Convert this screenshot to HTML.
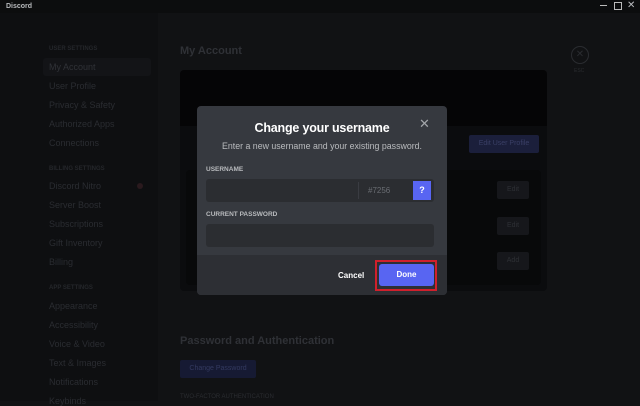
<!DOCTYPE html><html><head><style>
body{margin:0;width:640px;height:401px;overflow:hidden;background:#111214;font-family:"Liberation Sans",sans-serif;position:relative}
.a{position:absolute}
.tb{left:0;top:0;width:640px;height:13px;background:#0c0d0e;color:#b9bbbe;font-size:7px;font-weight:bold}
.side{left:0;top:13px;width:158px;height:388px;background:#0e0f11}
.h{font-size:6px;font-weight:bold;color:#25272b;left:49px}
.i{font-size:9px;color:#2a2c31;left:49px}
.box{background:#050506}
.btn{background:#16171b;color:#2e3035;font-size:7px;text-align:center;border-radius:2px}
</style></head><body>
<div class="a tb"><span class="a" style="left:6px;top:3px">Discord</span>
<span class="a" style="left:600px;top:5px;width:7px;height:1px;background:#bbb"></span>
<span class="a" style="left:614px;top:2px;width:6px;height:6px;border:1px solid #bbb"></span>
<span class="a" style="left:627px;top:0px;font-size:10px;font-weight:normal">✕</span></div>
<div class="a side"></div>
<div class="a" style="left:43px;top:58px;width:108px;height:18px;background:#131417;border-radius:3px"></div>
<div class="a h" style="top:46px">USER SETTINGS</div>
<div class="a i" style="top:62px;color:#303237">My Account</div>
<div class="a i" style="top:81px">User Profile</div>
<div class="a i" style="top:100px">Privacy &amp; Safety</div>
<div class="a i" style="top:119px">Authorized Apps</div>
<div class="a i" style="top:138px">Connections</div>
<div class="a h" style="top:166px">BILLING SETTINGS</div>
<div class="a i" style="top:181px">Discord Nitro</div>
<div class="a" style="left:137px;top:183px;width:6px;height:6px;border-radius:50%;background:#2a1a1e"></div>
<div class="a i" style="top:200px">Server Boost</div>
<div class="a i" style="top:219px">Subscriptions</div>
<div class="a i" style="top:238px">Gift Inventory</div>
<div class="a i" style="top:257px">Billing</div>
<div class="a h" style="top:285px">APP SETTINGS</div>
<div class="a i" style="top:301px">Appearance</div>
<div class="a i" style="top:320px">Accessibility</div>
<div class="a i" style="top:339px">Voice &amp; Video</div>
<div class="a i" style="top:358px">Text &amp; Images</div>
<div class="a i" style="top:377px">Notifications</div>
<div class="a i" style="top:396px">Keybinds</div>
<div class="a" style="left:180px;top:45px;font-size:11px;font-weight:bold;color:#2f3136">My Account</div>
<div class="a" style="left:571px;top:46px;width:16px;height:16px;border:1px solid #2a2c30;border-radius:50%;color:#2a2c30;font-size:10px;text-align:center;line-height:16px">✕</div>
<div class="a" style="left:574px;top:68px;font-size:5px;color:#2a2c30">ESC</div>
<div class="a box" style="left:180px;top:70px;width:367px;height:56px;border-radius:4px 4px 0 0"></div>
<div class="a" style="left:180px;top:126px;width:367px;height:165px;background:#0b0c0e;border-radius:0 0 4px 4px"></div>
<div class="a" style="left:186px;top:170px;width:355px;height:115px;background:#08090a;border-radius:4px"></div>
<div class="a btn" style="left:469px;top:135px;width:70px;height:18px;line-height:18px;background:#1b1f3b;color:#3a3f66">Edit User Profile</div>
<div class="a btn" style="left:497px;top:181px;width:32px;height:18px;line-height:18px">Edit</div>
<div class="a btn" style="left:497px;top:217px;width:32px;height:18px;line-height:18px">Edit</div>
<div class="a btn" style="left:497px;top:252px;width:32px;height:18px;line-height:18px">Add</div>
<div class="a" style="left:180px;top:335px;font-size:11px;font-weight:bold;color:#2f3136">Password and Authentication</div>
<div class="a btn" style="left:180px;top:360px;width:76px;height:18px;line-height:18px;background:#161a33;color:#343a60">Change Password</div>
<div class="a" style="left:180px;top:394px;font-size:6px;color:#2a2c30">TWO-FACTOR AUTHENTICATION</div>
<div class="a" style="left:197px;top:106px;width:250px;height:189px;background:#36393f;border-radius:4px;overflow:hidden">
<div class="a" style="left:0;width:250px;top:15px;text-align:center;font-size:12.5px;font-weight:bold;color:#fff;letter-spacing:-0.2px">Change your username</div>
<div class="a" style="left:222px;top:10px;color:#a3a6aa;font-size:13px">✕</div>
<div class="a" style="left:0;width:250px;top:35px;text-align:center;font-size:8.8px;color:#b9bbbe">Enter a new username and your existing password.</div>
<div class="a" style="left:9px;top:60px;font-size:6.5px;font-weight:bold;color:#b9bbbe">USERNAME</div>
<div class="a" style="left:9px;top:73px;width:228px;height:23px;background:#2b2d31;border-radius:3px"></div>
<div class="a" style="left:161px;top:76px;width:1px;height:17px;background:#3a3c42"></div>
<div class="a" style="left:171px;top:80px;font-size:8px;color:#6a6d73">#7256</div>
<div class="a" style="left:216px;top:75px;width:18px;height:19px;background:#5865f2;color:#fff;font-size:9px;font-weight:bold;text-align:center;line-height:19px">?</div>
<div class="a" style="left:9px;top:105px;font-size:6.5px;font-weight:bold;color:#b9bbbe">CURRENT PASSWORD</div>
<div class="a" style="left:9px;top:118px;width:228px;height:23px;background:#2b2d31;border-radius:3px"></div>
<div class="a" style="left:0;top:149px;width:250px;height:40px;background:#2d2f34"></div>
<div class="a" style="left:141px;top:165px;font-size:8px;font-weight:bold;color:#fff">Cancel</div>
<div class="a" style="left:178px;top:154px;width:62px;height:31px;border:2px solid #d0202c;box-sizing:border-box"></div>
<div class="a" style="left:182px;top:158px;width:55px;height:22px;background:#5865f2;border-radius:3px;color:#fff;font-size:8px;font-weight:bold;text-align:center;line-height:22px">Done</div>
</div>
</body></html>
